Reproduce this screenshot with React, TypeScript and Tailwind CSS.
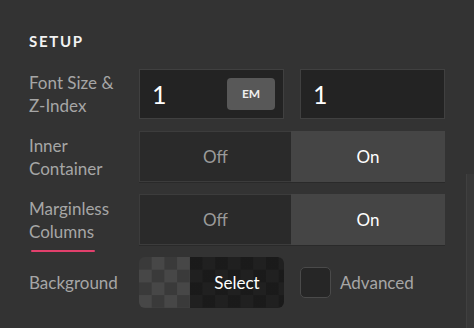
export default function App() {
  return (
    <div className="relative h-[328px] w-[474px] overflow-hidden bg-[#333333] font-['Lato',sans-serif]">
      <div className="pl-[29px] pr-[29px] pt-[31px]">
        <h2 className="text-[15px] font-bold leading-5 tracking-[1.7px] text-[#f2f2f2]">SETUP</h2>

        <div className="mt-[18px] flex flex-col gap-3">
          {/* Font size & z-index */}
          <div className="flex items-center">
            <div className="w-[110px] text-[17px] leading-[23px] text-[#a6a6a6]">
              Font Size &amp;
              <br />
              Z-Index
            </div>
            <div className="flex gap-4">
              <div className="flex h-[50px] w-[145px] items-center justify-between border border-[#404040] bg-[#232323] pl-3 pr-2">
                <span className="text-[25px] leading-none text-white">1</span>
                <span className="flex h-8 w-12 items-center justify-center rounded-[4px] bg-[#585858] text-[12px] font-bold text-[#eeeeee]">
                  EM
                </span>
              </div>
              <div className="flex h-[50px] w-[145px] items-center border border-[#404040] bg-[#232323] pl-3">
                <span className="text-[25px] leading-none text-white">1</span>
              </div>
            </div>
          </div>

          <ToggleRow top="Inner" bottom="Container" />
          <ToggleRow top="Marginless" bottom="Columns" underline />

          {/* Background */}
          <div className="flex items-center">
            <div className="w-[110px] text-[17px] leading-[23px] text-[#a6a6a6]">Background</div>
            <div className="h-[51px] w-[145px] overflow-hidden rounded-[6px] bg-[conic-gradient(#474747_25%,#3a3a3a_0_50%,#474747_0_75%,#3a3a3a_0)] bg-size-[25.4px_25.4px]">
              <div className="flex h-full items-center bg-[linear-gradient(to_right,transparent_51px,rgba(0,0,0,0.55)_51px)]">
                <span className="ml-[51px] flex-1 text-center text-[17px] text-white">Select</span>
              </div>
            </div>
            <div className="ml-4 h-[31px] w-[31px] rounded-[5px] border border-[#4a4a4a] bg-[#262626]" />
            <span className="ml-[9px] text-[17px] text-[#a6a6a6]">Advanced</span>
          </div>
        </div>
      </div>

      <div className="absolute bottom-0 right-0 top-[174px] w-2 border-l border-[#404040] bg-[#383838]" />
    </div>
  );
}

function ToggleRow({ top, bottom, underline }: { top: string; bottom: string; underline?: boolean }) {
  return (
    <div className="flex items-center">
      <div className="relative w-[110px] text-[17px] leading-[23px] text-[#a6a6a6]">
        {top}
        <br />
        {bottom}
        {underline && <div className="absolute -bottom-[9px] left-[2px] h-[2px] w-16 rounded-full bg-[#e2406c]" />}
      </div>
      <div className="flex h-[51px] w-[306px] shadow-[0_1px_0_#2a2a2a]">
        <div className="flex w-[152px] items-center justify-center border border-r-0 border-[#3c3c3c] bg-[#2a2a2a] text-[17px] text-[#9a9a9a]">
          Off
        </div>
        <div className="flex flex-1 items-center justify-center bg-[#454545] text-[17px] text-white">On</div>
      </div>
    </div>
  );
}
